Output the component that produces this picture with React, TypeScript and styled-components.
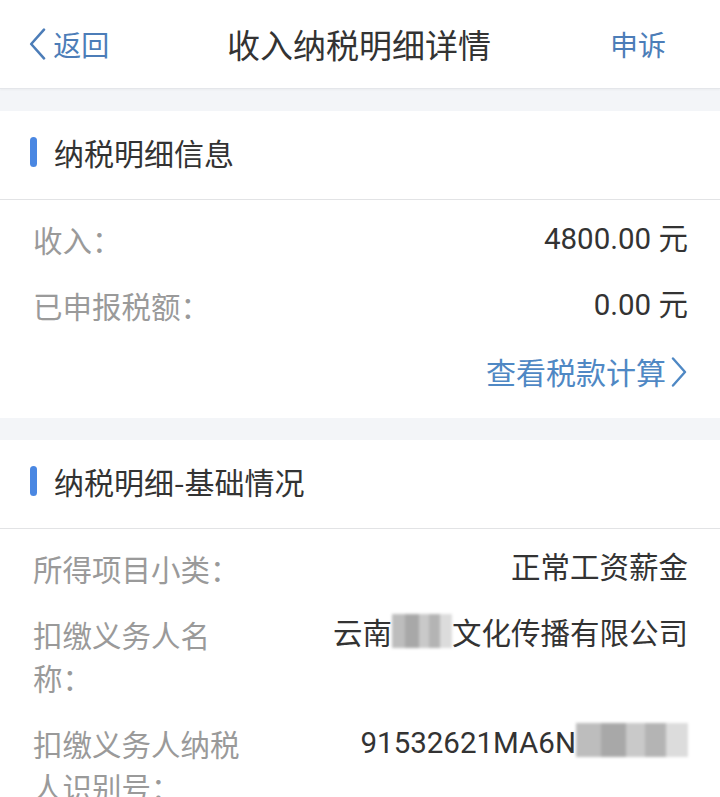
import React from "react";
import styled, { createGlobalStyle } from "styled-components";

const Global = createGlobalStyle`
  html, body { margin: 0; padding: 0; background: #f3f5f8; }
  body { font-family: Roboto, "Noto Sans CJK SC", "Noto Sans", sans-serif; -webkit-font-smoothing: antialiased; }
  * { box-sizing: border-box; }
`;

const Page = styled.div`
  width: 720px;
  height: 797px;
  background: #f3f5f8;
  display: flex;
  flex-direction: column;
  gap: 22px;
  overflow: hidden;
`;

const NavBar = styled.header`
  flex: none;
  height: 89px;
  background: #ffffff;
  border-bottom: 1px solid #e4e6ea;
  box-shadow: 0 1px 2px rgba(0, 0, 0, 0.04);
  display: grid;
  grid-template-columns: 140px 1fr 140px;
  align-items: center;
  padding: 0 28px;
`;

const NavButton = styled.button<{ $align: "left" | "right" }>`
  border: 0;
  background: none;
  padding: 0;
  display: flex;
  align-items: center;
  gap: 6px;
  justify-content: ${(p) => (p.$align === "left" ? "flex-start" : "flex-end")};
  padding-right: ${(p) => (p.$align === "right" ? "26px" : "0")};
  color: #4c7db8;
  font-family: "Noto Sans CJK SC", sans-serif;
  font-size: 28px;
  line-height: 1;
`;

const Title = styled.h1`
  margin: 0;
  text-align: center;
  font-family: "Noto Sans CJK SC", sans-serif;
  font-weight: 400;
  font-size: 33px;
  color: #333333;
  padding-right: 2px;
`;

const Card = styled.section`
  flex: none;
  background: #ffffff;
  display: flex;
  flex-direction: column;
`;

const CardHeader = styled.div`
  height: 89px;
  display: flex;
  align-items: center;
  gap: 17px;
  padding: 0 30px 6px;
  border-bottom: 1.5px solid #e2e3e5;
`;

const Bar = styled.span`
  width: 7px;
  height: 30px;
  border-radius: 4px;
  background: #4a87e2;
`;

const CardTitle = styled.h2`
  margin: 0;
  font-family: "Noto Sans CJK SC", sans-serif;
  font-weight: 400;
  font-size: 30px;
  color: #333333;
`;

const CardBody = styled.div`
  display: flex;
  flex-direction: column;
  gap: 23px;
  padding: 18px 32px 25px 33px;
`;

const Row = styled.div`
  display: grid;
  grid-template-columns: 225px 1fr;
  align-items: start;
  font-size: 29.5px;
  line-height: 43px;
`;

const Label = styled.div`
  color: #9a9a9a;
  font-family: "Noto Sans CJK SC", sans-serif;
`;

const Value = styled.div`
  color: #333333;
  text-align: right;
  white-space: nowrap;
`;

const LinkRow = styled.div`
  display: flex;
  justify-content: flex-end;
  align-items: center;
  gap: 4px;
  color: #4f88c4;
  font-family: "Noto Sans CJK SC", sans-serif;
  font-size: 30px;
  line-height: 43px;
`;

const Mosaic = styled.span<{ $w: number }>`
  display: inline-block;
  width: ${(p) => p.$w}px;
  height: 34px;
  vertical-align: -4px;
  filter: blur(1.5px);
  background: linear-gradient(
    90deg,
    #bdbdbd 0 22%,
    #a8a8a8 22% 45%,
    #c9c9c9 45% 62%,
    #b4b4b4 62% 80%,
    #dcdcdc 80% 100%
  );
`;

const Chevron = ({ dir, size, color }: { dir: "left" | "right"; size: number; color: string }) => (
  <svg width={size * 0.6} height={size} viewBox="0 0 12 20" fill="none">
    <polyline
      points={dir === "left" ? "10,1 2,10 10,19" : "2,1 10,10 2,19"}
      stroke={color}
      strokeWidth={1.6}
      strokeLinecap="round"
      strokeLinejoin="round"
    />
  </svg>
);

export default function App() {
  return (
    <>
      <Global />
      <Page>
        <NavBar>
          <NavButton $align="left">
            <Chevron dir="left" size={32} color="#4c7db8" />
            返回
          </NavButton>
          <Title>收入纳税明细详情</Title>
          <NavButton $align="right">申诉</NavButton>
        </NavBar>

        <Card>
          <CardHeader>
            <Bar />
            <CardTitle>纳税明细信息</CardTitle>
          </CardHeader>
          <CardBody>
            <Row>
              <Label>收入：</Label>
              <Value>4800.00 元</Value>
            </Row>
            <Row>
              <Label>已申报税额：</Label>
              <Value>0.00 元</Value>
            </Row>
            <LinkRow>
              查看税款计算
              <Chevron dir="right" size={30} color="#4f88c4" />
            </LinkRow>
          </CardBody>
        </Card>

        <Card>
          <CardHeader>
            <Bar />
            <CardTitle>纳税明细-基础情况</CardTitle>
          </CardHeader>
          <CardBody>
            <Row>
              <Label>所得项目小类：</Label>
              <Value>正常工资薪金</Value>
            </Row>
            <Row>
              <Label>扣缴义务人名称：</Label>
              <Value>
                云南<Mosaic $w={60} />文化传播有限公司
              </Value>
            </Row>
            <Row>
              <Label>扣缴义务人纳税人识别号：</Label>
              <Value>
                91532621MA6N
                <Mosaic $w={112} />
              </Value>
            </Row>
          </CardBody>
        </Card>
      </Page>
    </>
  );
}
